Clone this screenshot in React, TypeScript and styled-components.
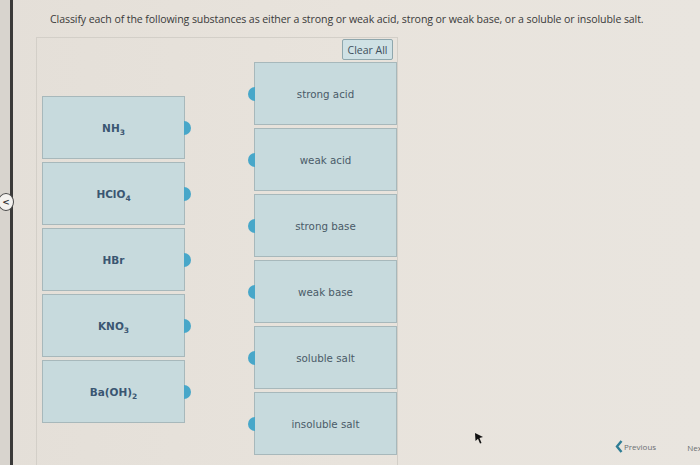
import React from 'react'
import styled, { createGlobalStyle } from 'styled-components'

const GlobalStyle = createGlobalStyle`
  html, body {
    margin: 0;
    padding: 0;
    background: #e7e2db;
    overflow: hidden;
  }
  * {
    box-sizing: border-box;
  }
`

const Page = styled.div`
  position: relative;
  display: flex;
  width: 700px;
  height: 465px;
  overflow: hidden;
  background: linear-gradient(90deg, #e4dfd8 0%, #e8e3dc 50%, #e9e5df 100%);
`

const Bezel = styled.div`
  width: 10px;
  background: #d8d4ce;
`

const EdgeLine = styled.div`
  width: 3px;
  background: #3b3a39;
`

const Main = styled.div`
  flex: 1;
  display: flex;
  flex-direction: column;
  padding: 12px 0 0 23px;
  min-width: 0;
`

const Title = styled.div`
  padding-left: 14px;
  font-family: 'Open Sans', 'Liberation Sans', sans-serif;
  font-size: 10.6px;
  line-height: 15px;
  color: #3a3a3a;
  white-space: nowrap;
  letter-spacing: -0.1px;
`

const Body = styled.div`
  flex: 1;
  display: flex;
  margin-top: 10px;
`

const Panel = styled.section`
  width: 362px;
  border: 1px solid #d3cfc8;
  border-bottom: none;
  padding: 1px 4px 0 5px;
`

const Header = styled.div`
  display: flex;
  justify-content: flex-end;
`

const ClearButton = styled.button`
  width: 51px;
  height: 21px;
  padding: 0;
  border: 1px solid #8fa7ad;
  border-radius: 2px;
  background: #cfe1e5;
  color: #3e4f5c;
  font-family: 'Open Sans', 'Liberation Sans', sans-serif;
  font-size: 10.5px;
  cursor: pointer;
`

const Columns = styled.div`
  display: grid;
  grid-template-columns: 143px 143px;
  column-gap: 69px;
  align-items: start;
`

const Column = styled.div<{ $offset: number }>`
  display: flex;
  flex-direction: column;
  gap: 3px;
  margin-top: ${(p) => p.$offset}px;
`

const Tile = styled.div<{ $side: 'left' | 'right'; $bold?: boolean }>`
  position: relative;
  height: 63px;
  display: flex;
  align-items: center;
  justify-content: center;
  background: #c7dadd;
  border: 1px solid #a7b8bb;
  font-family: 'DejaVu Sans', Verdana, sans-serif;
  font-size: ${(p) => (p.$bold ? '10.5px' : '10.3px')};
  font-weight: ${(p) => (p.$bold ? 700 : 400)};
  color: ${(p) => (p.$bold ? '#3a5672' : '#4a5a68')};

  &::after {
    content: '';
    position: absolute;
    top: 50%;
    width: 7px;
    height: 14px;
    margin-top: -7px;
    background: #48a7c9;
    ${(p) =>
      p.$side === 'left'
        ? 'left: 100%; border-radius: 0 7px 7px 0;'
        : 'right: 100%; border-radius: 7px 0 0 7px;'}
  }

  sub {
    font-size: 7.5px;
    vertical-align: -3px;
    line-height: 0;
  }
`

const NavArea = styled.div`
  flex: 1;
  display: flex;
  align-items: flex-end;
  gap: 31px;
  padding: 0 0 12px 217px;
  white-space: nowrap;
`

const NavLink = styled.span`
  display: flex;
  align-items: center;
  gap: 1px;
  font-family: 'Open Sans', 'Liberation Sans', sans-serif;
  font-size: 8px;
  color: #6a6f73;
`

const Chevron = styled.svg`
  width: 8px;
  height: 13px;
`

const BackCircle = styled.div`
  position: absolute;
  left: -2px;
  top: 193px;
  width: 16px;
  height: 18px;
  border-radius: 50%;
  background: #f4f2ef;
  border: 1.5px solid #4a4a4a;
  display: flex;
  align-items: center;
  justify-content: center;
  font-family: 'DejaVu Sans', sans-serif;
  font-weight: 700;
  font-size: 9px;
  color: #333;
`

const Cursor = styled.svg`
  position: absolute;
  left: 474px;
  top: 432px;
  width: 10px;
  height: 12px;
`

const substances: React.ReactNode[] = [
  <>NH<sub>3</sub></>,
  <>HClO<sub>4</sub></>,
  <>HBr</>,
  <>KNO<sub>3</sub></>,
  <>Ba(OH)<sub>2</sub></>,
]

const categories = [
  'strong acid',
  'weak acid',
  'strong base',
  'weak base',
  'soluble salt',
  'insoluble salt',
]

const App: React.FC = () => {
  return (
    <>
      <GlobalStyle />
      <Page>
        <Bezel />
        <EdgeLine />
        <Main>
          <Title>
            Classify each of the following substances as either a strong or weak acid, strong or weak
            base, or a soluble or insoluble salt.
          </Title>
          <Body>
            <Panel>
              <Header>
                <ClearButton type='button'>Clear All</ClearButton>
              </Header>
              <Columns>
                <Column $offset={36}>
                  {substances.map((s, i) => (
                    <Tile key={i} $side='left' $bold>
                      <span>{s}</span>
                    </Tile>
                  ))}
                </Column>
                <Column $offset={2}>
                  {categories.map((c) => (
                    <Tile key={c} $side='right'>
                      {c}
                    </Tile>
                  ))}
                </Column>
              </Columns>
            </Panel>
            <NavArea>
              <NavLink>
                <Chevron viewBox='0 0 8 13'>
                  <path d='M6.5 1 L2 6.5 L6.5 12' fill='none' stroke='#2e7d95' strokeWidth='2.4' />
                </Chevron>
                Previous
              </NavLink>
              <NavLink>Next</NavLink>
            </NavArea>
          </Body>
        </Main>
        <BackCircle>&lt;</BackCircle>
        <Cursor viewBox='0 0 10 12'>
          <path d='M1 1 L9 5 L5.5 6 L7.5 11 L6 11.5 L4 6.8 L1.5 9 Z' fill='#111' />
        </Cursor>
      </Page>
    </>
  )
}

export default App
